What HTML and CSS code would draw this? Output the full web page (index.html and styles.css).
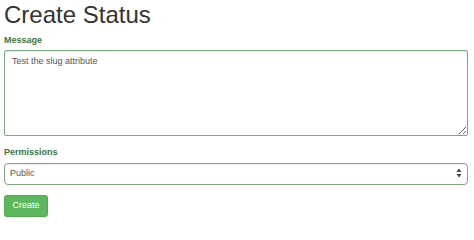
FILE: index.html
```html
<!DOCTYPE html>
<html>
<head>
<meta charset="utf-8">
<link rel="stylesheet" href="styles.css">
</head>
<body>
<div class="page">
  <h1 class="title">Create Status</h1>
  <form class="form">
    <div class="group">
      <label class="label" for="msg">Message</label>
      <textarea id="msg" class="control textarea">Test the slug attribute</textarea>
    </div>
    <div class="group">
      <label class="label" for="perm">Permissions</label>
      <div class="select-wrap">
        <select id="perm" class="control select">
          <option>Public</option>
          <option>Private</option>
        </select>
        <svg class="select-arrows" width="6" height="10" viewBox="0 0 6 10">
          <path d="M3 0.5 L5.5 4 L0.5 4 Z" fill="#444"/>
          <path d="M3 9.5 L5.5 6 L0.5 6 Z" fill="#444"/>
        </svg>
      </div>
    </div>
    <button type="button" class="btn">Create</button>
  </form>
</div>
</body>
</html>
```

FILE: styles.css
```css
html, body {
  margin: 0;
  padding: 0;
  background: #fff;
}

.page {
  padding: 0 6px 0 4px;
  font-family: "Liberation Sans", Arial, sans-serif;
  color: #333;
}

.title {
  margin: 2px 0 6px;
  font-size: 24px;
  line-height: 26px;
  font-weight: 400;
  color: #333;
}

.form {
  display: flex;
  flex-direction: column;
}

.group {
  display: flex;
  flex-direction: column;
  margin-bottom: 10px;
}

.label {
  display: block;
  font-size: 9px;
  line-height: 13px;
  font-weight: 700;
  color: #3c763d;
  margin-bottom: 3px;
}

.control {
  box-sizing: border-box;
  width: 100%;
  margin: 0;
  font-family: "Liberation Sans", Arial, sans-serif;
  font-size: 9px;
  line-height: 13px;
  color: #555;
  background: #fff;
  border: 1px solid #7fa77f;
  box-shadow: inset 0 1px 1px rgba(0, 0, 0, 0.075);
  outline: none;
}

.textarea {
  height: 86px;
  padding: 4px 7px;
  border-radius: 2px;
  resize: vertical;
}

.select-wrap {
  position: relative;
}

.select {
  height: 22px;
  padding: 0 20px 0 5px;
  border-radius: 4px;
  -webkit-appearance: none;
  appearance: none;
}

.select-arrows {
  position: absolute;
  right: 6px;
  top: 6px;
}

.btn {
  align-self: flex-start;
  box-sizing: border-box;
  height: 22px;
  padding: 0 7.5px;
  margin: 0;
  font-family: "Liberation Sans", Arial, sans-serif;
  font-size: 9px;
  line-height: 13px;
  color: #fff;
  background: #5cb85c;
  border: 1px solid #4cae4c;
  border-radius: 2.6px;
  cursor: pointer;
}
```
